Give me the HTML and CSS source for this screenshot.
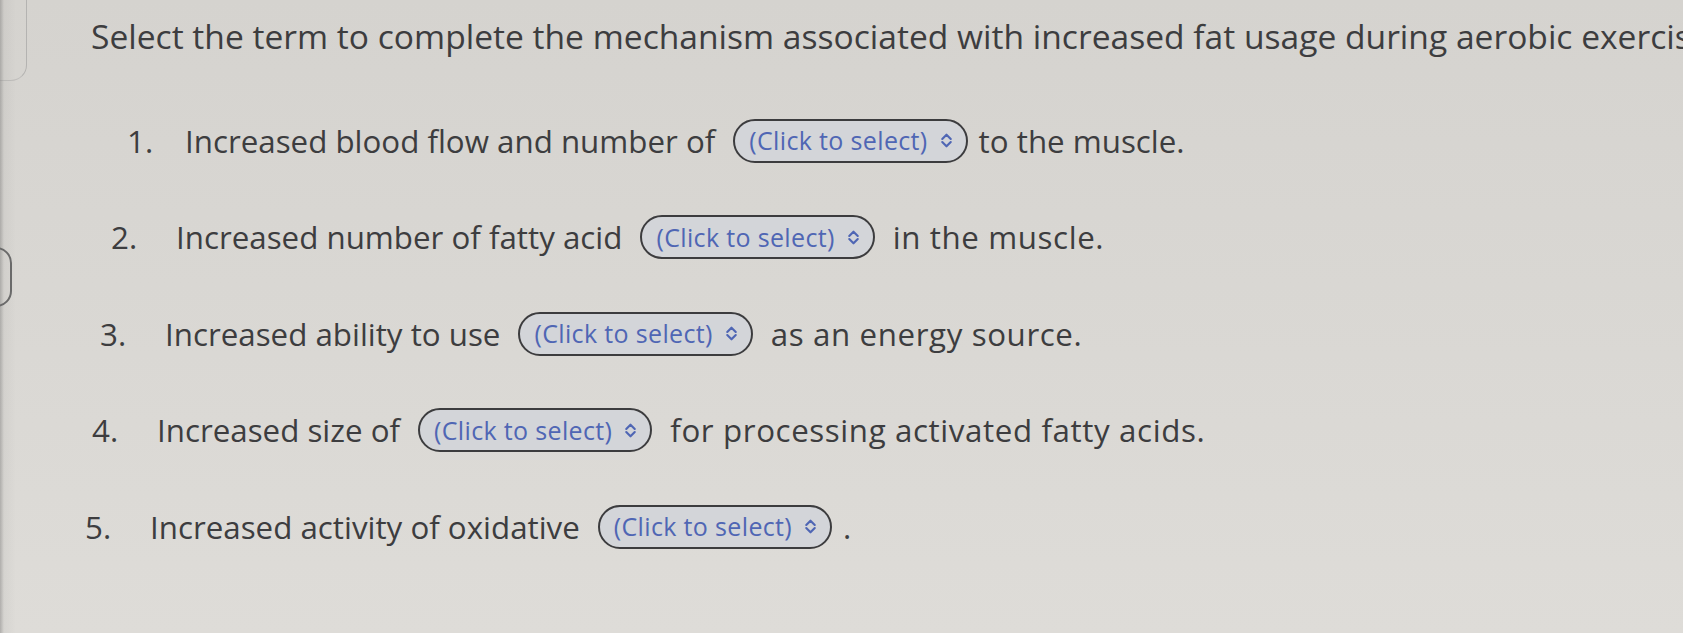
FILE: index.html
```html
<!DOCTYPE html>
<html lang="en">
<head>
<meta charset="utf-8">
<title>Fat usage during aerobic exercise</title>
<link rel="stylesheet" href="styles.css">
</head>
<body>
<div class="screen">
  <div class="corner-edge"></div>
  <div class="side-tab"></div>
  <main class="question">
    <p class="prompt">Select the term to complete the mechanism associated with increased fat usage during aerobic exercise.</p>
    <ol class="items">
      <li class="item item-1">
        <span class="num">1.</span>
        <span class="text">Increased blood flow and number of</span>
        <button class="dd" type="button"><span class="dd-label">(Click to select)</span><svg class="chev" viewBox="0 0 12 16" width="13" height="17"><path d="M2 6.5 6 2.5 10 6.5M2 9.5 6 13.5 10 9.5" fill="none" stroke="currentColor" stroke-width="2" stroke-linecap="round" stroke-linejoin="round"/></svg></button>
        <span class="text after tight">to the muscle.</span>
      </li>
      <li class="item item-2">
        <span class="num">2.</span>
        <span class="text">Increased number of fatty acid</span>
        <button class="dd" type="button"><span class="dd-label">(Click to select)</span><svg class="chev" viewBox="0 0 12 16" width="13" height="17"><path d="M2 6.5 6 2.5 10 6.5M2 9.5 6 13.5 10 9.5" fill="none" stroke="currentColor" stroke-width="2" stroke-linecap="round" stroke-linejoin="round"/></svg></button>
        <span class="text after wide">in the muscle.</span>
      </li>
      <li class="item item-3">
        <span class="num">3.</span>
        <span class="text">Increased ability to use</span>
        <button class="dd" type="button"><span class="dd-label">(Click to select)</span><svg class="chev" viewBox="0 0 12 16" width="13" height="17"><path d="M2 6.5 6 2.5 10 6.5M2 9.5 6 13.5 10 9.5" fill="none" stroke="currentColor" stroke-width="2" stroke-linecap="round" stroke-linejoin="round"/></svg></button>
        <span class="text after wide">as an energy source.</span>
      </li>
      <li class="item item-4">
        <span class="num">4.</span>
        <span class="text">Increased size of</span>
        <button class="dd" type="button"><span class="dd-label">(Click to select)</span><svg class="chev" viewBox="0 0 12 16" width="13" height="17"><path d="M2 6.5 6 2.5 10 6.5M2 9.5 6 13.5 10 9.5" fill="none" stroke="currentColor" stroke-width="2" stroke-linecap="round" stroke-linejoin="round"/></svg></button>
        <span class="text after wide">for processing activated fatty acids.</span>
      </li>
      <li class="item item-5">
        <span class="num">5.</span>
        <span class="text">Increased activity of oxidative</span>
        <button class="dd" type="button"><span class="dd-label">(Click to select)</span><svg class="chev" viewBox="0 0 12 16" width="13" height="17"><path d="M2 6.5 6 2.5 10 6.5M2 9.5 6 13.5 10 9.5" fill="none" stroke="currentColor" stroke-width="2" stroke-linecap="round" stroke-linejoin="round"/></svg></button>
        <span class="text after tight">.</span>
      </li>
    </ol>
  </main>
</div>
</body>
</html>
```

FILE: styles.css
```css
html, body {
  margin: 0;
  padding: 0;
  height: 100%;
}

body {
  overflow: hidden;
  background: #d9d7d3;
  font-family: "Open Sans", "Noto Sans", sans-serif;
  color: #3d3d3f;
}

.screen {
  position: relative;
  width: 1683px;
  height: 633px;
  overflow: hidden;
  background:
    linear-gradient(90deg, rgba(90,90,90,0.35) 0, rgba(120,120,120,0.08) 4px, rgba(120,120,120,0) 16px),
    linear-gradient(180deg, #d5d3cf 0%, #d9d7d3 45%, #dedcd8 100%);
}

.corner-edge {
  position: absolute;
  left: -20px;
  top: -10px;
  width: 46px;
  height: 90px;
  border-right: 1px solid rgba(140,140,140,0.45);
  border-bottom: 1px solid rgba(140,140,140,0.3);
  border-bottom-right-radius: 16px;
}

.side-tab {
  position: absolute;
  left: -22px;
  top: 247px;
  width: 30px;
  height: 56px;
  border: 2px solid #6a6a6a;
  border-radius: 16px;
}

.question {
  padding-top: 13px;
}

.prompt {
  margin: 0 0 0 91px;
  font-size: 33.6px;
  line-height: 46px;
  white-space: nowrap;
}

.items {
  list-style: none;
  margin: 59px 0 0 0;
  padding: 0;
  display: flex;
  flex-direction: column;
  gap: 51.5px;
}

.item {
  display: flex;
  align-items: center;
  height: 45px;
  font-size: 31.3px;
  white-space: nowrap;
}

.item-1 { padding-left: 127px; }
.item-2 { padding-left: 111px; }
.item-3 { padding-left: 100px; }
.item-4 { padding-left: 92px; }
.item-5 { padding-left: 85px; }

.num {
  width: 65px;
  flex: none;
}

.item-1 .num {
  width: 58px;
}

.dd {
  display: inline-flex;
  align-items: center;
  gap: 12px;
  height: 44px;
  box-sizing: border-box;
  margin: 0 18px 0 18px;
  padding: 0 13px 0 14px;
  border: 2px solid #3c3c3e;
  border-radius: 22px;
  background: #d3d5d9;
  color: #4f66b4;
  font-family: "Open Sans", "Noto Sans", sans-serif;
  font-size: 25px;
  letter-spacing: 0.35px;
  cursor: pointer;
}

.dd-label {
  line-height: 1;
}

.chev {
  flex: none;
}

.after.tight {
  margin-left: -7px;
}

.after.wide {
  letter-spacing: 0.6px;
}
```
